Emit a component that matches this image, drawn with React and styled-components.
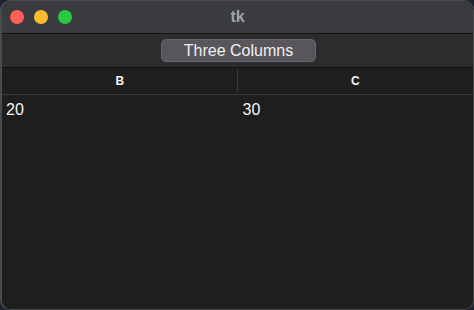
import React from "react";
import styled, { createGlobalStyle } from "styled-components";

const Global = createGlobalStyle`
  html, body { margin: 0; padding: 0; background: #1c2230; }
  body { font-family: "Liberation Sans", Arial, sans-serif; }
`;

const Window = styled.div`
  width: 474px;
  height: 310px;
  box-sizing: border-box;
  border-radius: 10px;
  overflow: hidden;
  background: #1e1e1e;
  border: 1px solid #4a4b4d;
  border-left-width: 2px;
  display: flex;
  flex-direction: column;
`;

const TitleBar = styled.div`
  height: 32px;
  flex: none;
  background: #3a3b3e;
  border-bottom: 1px solid #141414;
  display: flex;
  align-items: center;
  position: relative;
  padding-left: 8px;
  gap: 10px;
`;

const Light = styled.span`
  width: 14px;
  height: 14px;
  border-radius: 50%;
  background: ${(p) => p.$c};
`;

const Title = styled.div`
  position: absolute;
  left: 0;
  right: 0;
  top: 0;
  bottom: 0;
  display: flex;
  align-items: center;
  justify-content: center;
  color: #a2a3a5;
  font-weight: bold;
  font-size: 16px;
  pointer-events: none;
`;

const Toolbar = styled.div`
  height: 33px;
  flex: none;
  background: #2c2c2c;
  border-bottom: 1px solid #111;
  display: flex;
  align-items: center;
  justify-content: center;
`;

const Button = styled.button`
  width: 155px;
  height: 23px;
  margin-left: 2px;
  background: #58565b;
  border: 1px solid #67656a;
  border-radius: 5px;
  color: #f0f0f0;
  font-family: "Liberation Sans", Arial, sans-serif;
  font-size: 16px;
  padding: 0;
`;

const Header = styled.div`
  height: 26px;
  flex: none;
  display: grid;
  grid-template-columns: 1fr 1fr;
  background: #1e1e1e;
  border-bottom: 1px solid #3a3a3a;
`;

const HeadCell = styled.div`
  display: flex;
  align-items: center;
  justify-content: center;
  color: #f2f2f2;
  font-size: 12px;
  font-weight: bold;
  border-left: ${(p) => (p.$sep ? "1px solid #3a3a3a" : "none")};
  margin: 2px 0 2px ${(p) => (p.$sep ? "-1px" : "0")};
`;

const Body = styled.div`
  flex: 1;
  display: grid;
  grid-template-columns: 1fr 1fr;
  align-content: start;
  background: #1e1e1e;
`;

const Cell = styled.div`
  color: #f6f6f6;
  font-size: 16px;
  padding: 6px 0 0 ${(p) => (p.$right ? "5px" : "4px")};
`;

export default function App() {
  return (
    <>
      <Global />
      <Window>
        <TitleBar>
          <Light $c="#fe5f57" />
          <Light $c="#febc2e" />
          <Light $c="#28c840" />
          <Title>tk</Title>
        </TitleBar>
        <Toolbar>
          <Button>Three Columns</Button>
        </Toolbar>
        <Header>
          <HeadCell>B</HeadCell>
          <HeadCell $sep>C</HeadCell>
        </Header>
        <Body>
          <Cell>20</Cell>
          <Cell $right>30</Cell>
        </Body>
      </Window>
    </>
  );
}
